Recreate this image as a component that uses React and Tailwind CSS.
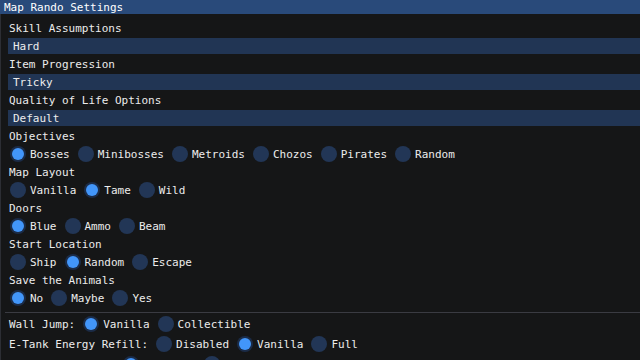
import React from "react";

const font = { fontFamily: '"DejaVu Sans Mono", "Liberation Mono", monospace' };

function Radio({ label, checked }) {
  return (
    <div className="flex items-center gap-[4px]">
      {checked ? (
        <div className="w-[16px] h-[16px] rounded-full bg-[#1b2c48] flex items-center justify-center">
          <div className="w-[12px] h-[12px] rounded-full bg-[#4296fa]" />
        </div>
      ) : (
        <div className="w-[16px] h-[16px] rounded-full bg-[#223656]" />
      )}
      <span>{label}</span>
    </div>
  );
}

function Label({ children }) {
  return <div className="h-[18px] flex items-center pl-[1px]">{children}</div>;
}

function Combo({ value }) {
  return (
    <div className="h-[18px] flex items-center">
      <div className="h-[16px] w-full bg-[#213554] flex items-center pl-[5px]">{value}</div>
    </div>
  );
}

function RadioRow({ items, checked }) {
  return (
    <div className="h-[18px] flex items-center pl-[2px] gap-[8px]">
      {items.map((it) => (
        <Radio key={it} label={it} checked={it === checked} />
      ))}
    </div>
  );
}

function InlineRow({ label, items, checked }) {
  return (
    <div className="h-[20px] flex items-center pl-[1px] gap-[8px]">
      <span>{label}</span>
      {items.map((it) => (
        <Radio key={it} label={it} checked={it === checked} />
      ))}
    </div>
  );
}

export default function App() {
  return (
    <div
      className="w-[640px] h-[360px] overflow-hidden bg-[#151617] text-[#ececec] text-[11px] leading-none relative"
      style={font}
    >
      <div className="h-[14px] bg-[#294a7a] text-white flex items-center pl-[4px]">Map Rando Settings</div>
      <div className="absolute left-0 top-[14px] bottom-0 w-[1px] bg-[#2c2e34]" />
      <div className="pl-[8px] pt-[5px]">
        <Label>Skill Assumptions</Label>
        <Combo value="Hard" />
        <Label>Item Progression</Label>
        <Combo value="Tricky" />
        <Label>Quality of Life Options</Label>
        <Combo value="Default" />
        <Label>Objectives</Label>
        <RadioRow
          items={["Bosses", "Minibosses", "Metroids", "Chozos", "Pirates", "Random"]}
          checked="Bosses"
        />
        <Label>Map Layout</Label>
        <RadioRow items={["Vanilla", "Tame", "Wild"]} checked="Tame" />
        <Label>Doors</Label>
        <RadioRow items={["Blue", "Ammo", "Beam"]} checked="Blue" />
        <Label>Start Location</Label>
        <RadioRow items={["Ship", "Random", "Escape"]} checked="Random" />
        <Label>Save the Animals</Label>
        <RadioRow items={["No", "Maybe", "Yes"]} checked="No" />
        <div className="mt-[5px] ml-[-3px] h-[1px] bg-[#3a3b42]" />
        <div className="h-[1px]" />
        <InlineRow label="Wall Jump:" items={["Vanilla", "Collectible"]} checked="Vanilla" />
        <InlineRow
          label="E-Tank Energy Refill:"
          items={["Disabled", "Vanilla", "Full"]}
          checked="Vanilla"
        />
        <InlineRow label="Area Assignment:" items={["Standard", "Random"]} checked="Standard" />
      </div>
    </div>
  );
}
